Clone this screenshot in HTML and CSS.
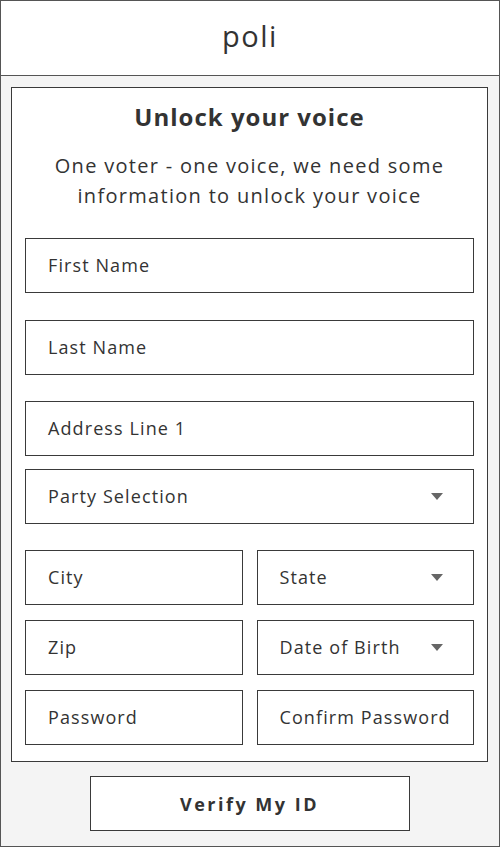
FILE: index.html
```html
<!DOCTYPE html>
<html>
<head>
<meta charset="utf-8">
<link rel="stylesheet" href="styles.css">
</head>
<body>
<div class="app">
  <header class="topbar"><span class="brand">poli</span></header>
  <main class="content">
    <section class="card">
      <h1 class="title">Unlock your voice</h1>
      <p class="subtitle">One voter - one voice, we need some information to unlock your voice</p>
      <div class="form">
        <div class="field full gap-a">First Name</div>
        <div class="field full gap-b">Last Name</div>
        <div class="field full gap-s">Address Line 1</div>
        <div class="field full select gap-b">Party Selection<span class="caret"></span></div>
        <div class="row gap-m">
          <div class="field">City</div>
          <div class="field select">State<span class="caret"></span></div>
        </div>
        <div class="row gap-m">
          <div class="field">Zip</div>
          <div class="field select">Date of Birth<span class="caret"></span></div>
        </div>
        <div class="row">
          <div class="field">Password</div>
          <div class="field">Confirm Password</div>
        </div>
      </div>
    </section>
    <button class="verify">Verify My ID</button>
  </main>
</div>
</body>
</html>
```
FILE: styles.css
```css
* { box-sizing: border-box; }
html, body { margin: 0; padding: 0; }
body { font-family: "Open Sans", "DejaVu Sans", sans-serif; color: #333; }
.app {
  width: 500px;
  height: 847px;
  border: 1px solid #555;
  background: #f4f4f4;
  display: flex;
  flex-direction: column;
}
.topbar {
  height: 75px;
  background: #fff;
  border-bottom: 1px solid #555;
  display: flex;
  align-items: center;
  justify-content: center;
}
.brand { font-size: 29px; letter-spacing: 1.5px; color: #333; margin-top: -6px; }
.content {
  padding: 11px 11px 0 10px;
  display: flex;
  flex-direction: column;
  align-items: center;
}
.card {
  width: 477px;
  background: #fff;
  border: 1px solid #3a3a3a;
  padding: 12px 13px 16px 13px;
}
.title {
  margin: 0;
  text-align: center;
  font-size: 24px;
  font-weight: 700;
  letter-spacing: 1px;
  line-height: 34px;
  color: #333;
}
.subtitle {
  margin: 17px 0 27px;
  text-align: center;
  font-size: 20px;
  line-height: 30px;
  letter-spacing: 1.3px;
  color: #333;
}
.form { display: flex; flex-direction: column; }
.field {
  height: 55px;
  border: 1px solid #3a3a3a;
  background: #fff;
  display: flex;
  align-items: center;
  padding-left: 22px;
  padding-bottom: 1px;
  font-size: 18px;
  letter-spacing: 1.1px;
  color: #333;
  position: relative;
}
.gap-a { margin-bottom: 27px; }
.gap-b { margin-bottom: 26px; }
.gap-m { margin-bottom: 15px; }
.gap-s { margin-bottom: 13px; }
.row { display: grid; grid-template-columns: 1fr 1fr; column-gap: 14px; }
.select { justify-content: space-between; padding-right: 30px; }
.caret {
  width: 0; height: 0;
  border-left: 6px solid transparent;
  border-right: 6px solid transparent;
  border-top: 7px solid #666;
}
.verify {
  margin-top: 14px;
  width: 320px;
  height: 55px;
  background: #fff;
  border: 1px solid #3a3a3a;
  font-family: "Open Sans", "DejaVu Sans", sans-serif;
  font-size: 18px;
  font-weight: 700;
  letter-spacing: 2.5px;
  color: #333;
  padding: 0;
}
```
